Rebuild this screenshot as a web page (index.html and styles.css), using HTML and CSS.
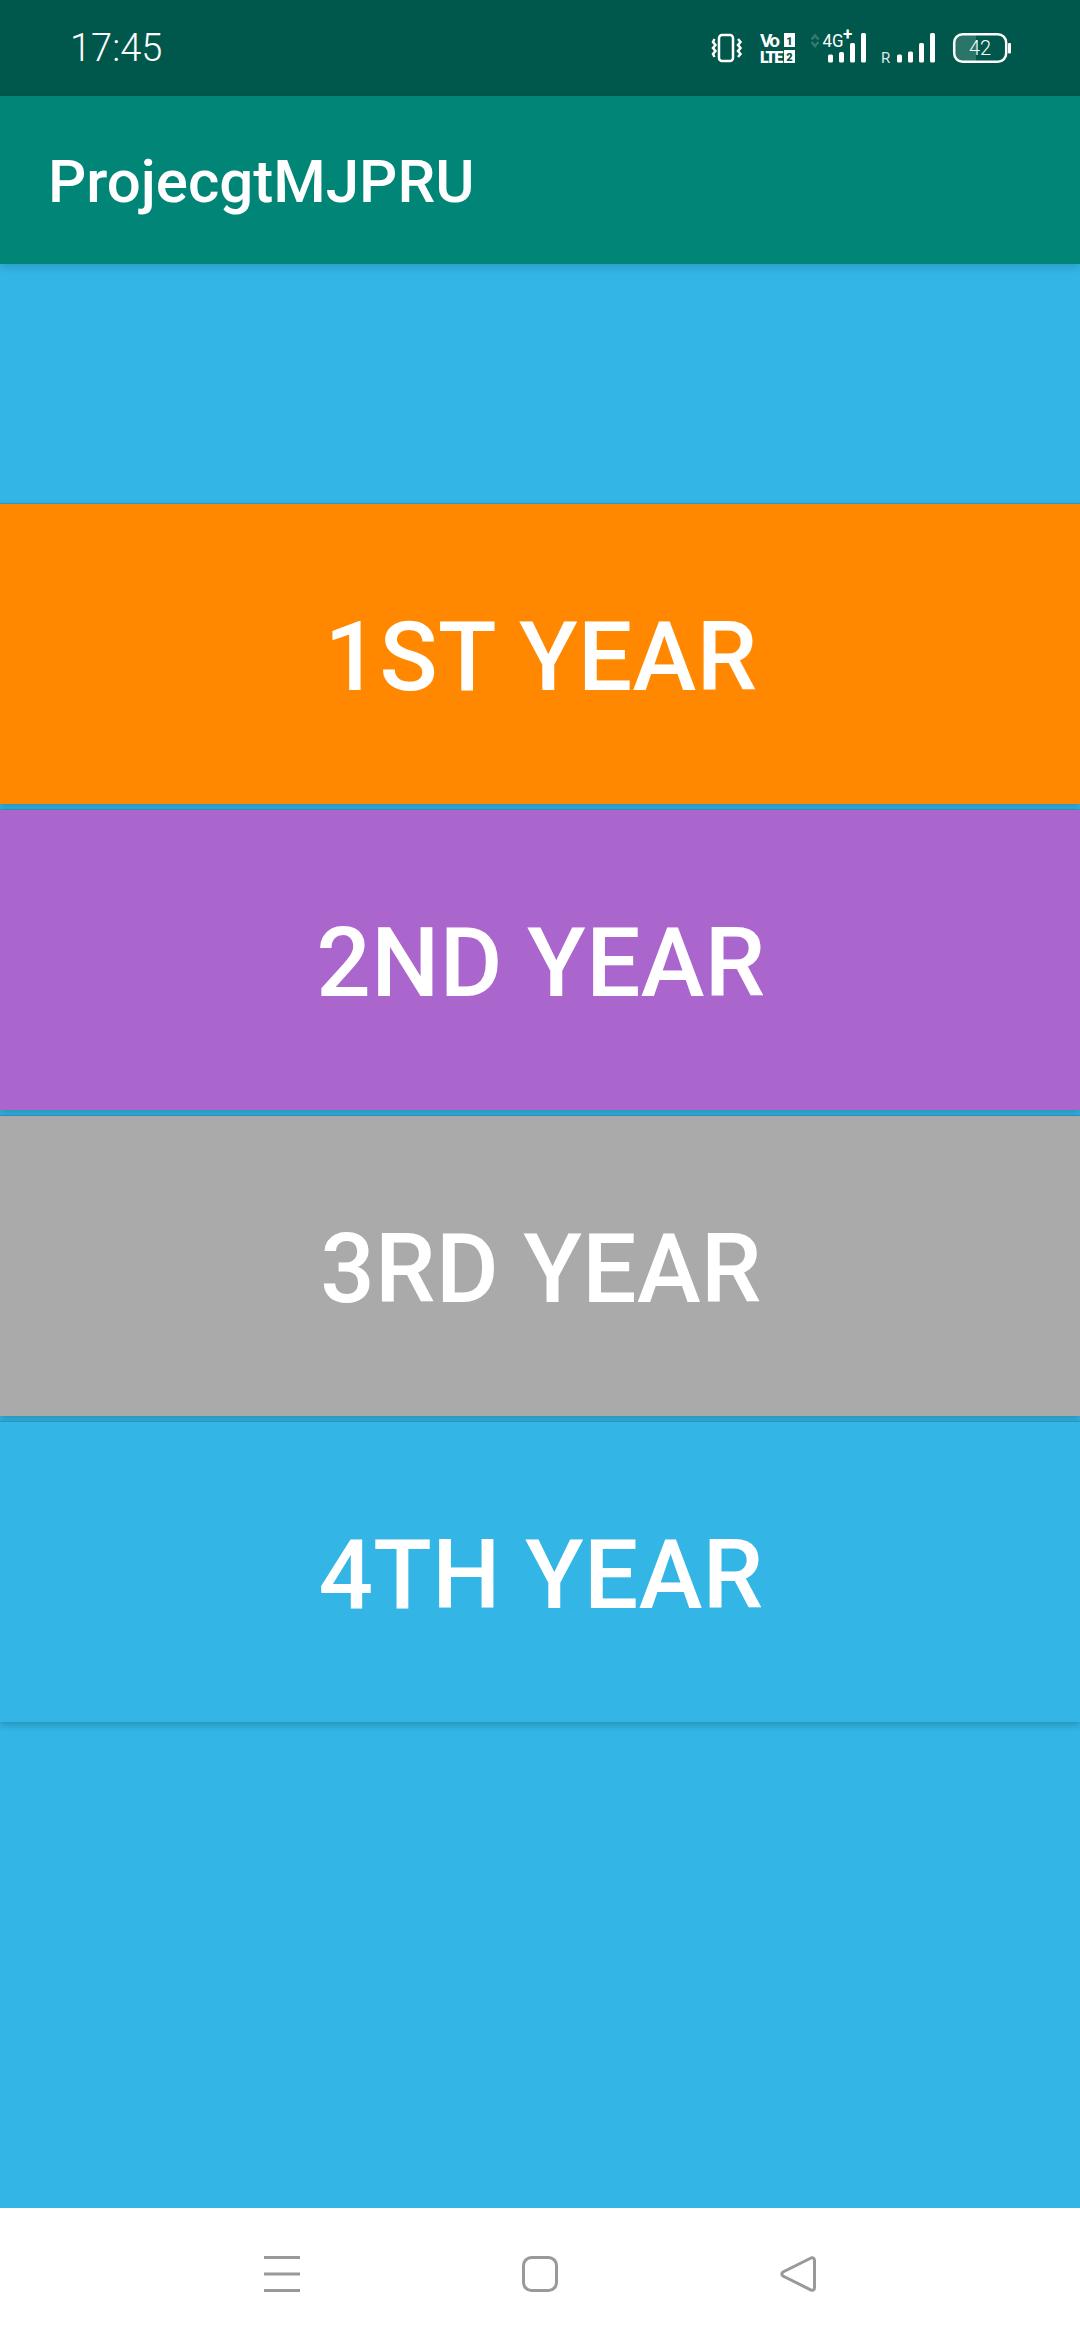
FILE: index.html
```html
<!DOCTYPE html>
<html lang="en">
<head>
    <meta charset="UTF-8">
    <meta name="viewport" content="width=device-width, initial-scale=1.0">
    <title>ProjecgtMJPRU</title>
    <link rel="stylesheet" href="styles.css">
</head>
<body>

    <div class="phone">
        <div class="status-bar">
            <span class="clock">17:45</span>
            <div class="status-icons">
                <!-- vibrate -->
                <svg class="status-icon" width="33" height="96" viewBox="0 0 33 96">
                    <rect x="7" y="35" width="14" height="26" rx="3" class="line"/>
                    <polyline points="2.5,39 1,42 3.5,45 1,48 3.5,51 1,54 2.5,57" class="line"/>
                    <polyline points="26,39 28.5,42 26,45 28.5,48 26,51 28.5,54 26,57" class="line"/>
                </svg>
                <!-- volte, both sims -->
                <svg class="status-icon" width="35" height="96" viewBox="0 0 35 96">
                    <text x="0" y="47" class="tiny" textLength="20" lengthAdjust="spacing">Vo</text>
                    <text x="0" y="62.5" class="lte">LTE</text>
                    <rect x="24" y="33" width="11" height="14" class="solid"/>
                    <text x="29.5" y="44.5" class="sim">1</text>
                    <rect x="24" y="50" width="11" height="13" class="solid"/>
                    <text x="29.5" y="61" class="sim">2</text>
                </svg>
                <!-- 4g+ signal -->
                <svg class="status-icon" width="56" height="96" viewBox="0 0 56 96">
                    <polyline points="1.5,39.5 5,35.5 8.5,39.5" class="dim"/>
                    <polyline points="1.5,42 5,46 8.5,42" class="dim"/>
                    <text x="12.5" y="46.5" class="net" textLength="21" lengthAdjust="spacingAndGlyphs">4G</text>
                    <text x="33" y="40" class="plus">+</text>
                    <rect x="18" y="54.5" width="5" height="8" rx="1.5" class="solid"/>
                    <rect x="29" y="52" width="5" height="10.5" rx="1.5" class="solid"/>
                    <rect x="40" y="43" width="5" height="19.5" rx="1.5" class="solid"/>
                    <rect x="51" y="33" width="5" height="29.5" rx="1.5" class="solid"/>
                </svg>
                <!-- roaming signal -->
                <svg class="status-icon" width="57" height="96" viewBox="0 0 57 96">
                    <text x="0" y="63" class="roam">R</text>
                    <rect x="16" y="54.5" width="5" height="8" rx="1.5" class="solid"/>
                    <rect x="27" y="51.5" width="5" height="11" rx="1.5" class="solid"/>
                    <rect x="38" y="43" width="5" height="19.5" rx="1.5" class="solid"/>
                    <rect x="49" y="33" width="5" height="29.5" rx="1.5" class="solid"/>
                </svg>
                <!-- battery -->
                <svg class="status-icon" width="58" height="96" viewBox="0 0 58 96">
                    <path d="M9 35 H23 V61 H9 a7 7 0 0 1 -7 -7 V42 a7 7 0 0 1 7 -7 Z" class="charge"/>
                    <rect x="1.2" y="34.2" width="52" height="27.6" rx="8.5" class="line"/>
                    <rect x="55" y="43" width="3" height="10.5" rx="1" class="solid"/>
                    <text x="27" y="55" class="level">42</text>
                </svg>
            </div>
        </div>

        <div class="app-bar">ProjecgtMJPRU</div>

        <div class="content">
            <button class="year-button orange">1ST YEAR</button>
            <button class="year-button purple">2ND YEAR</button>
            <button class="year-button grey">3RD YEAR</button>
            <button class="year-button blue">4TH YEAR</button>
        </div>

        <div class="nav-bar">
            <svg width="36" height="36" viewBox="0 0 36 36">
                <path d="M0 1.5 H36 M0 18 H36 M0 34.5 H36" class="nav-menu"/>
            </svg>
            <svg width="36" height="36" viewBox="0 0 36 36">
                <rect x="1.5" y="1.5" width="33" height="33" rx="8" class="nav-line"/>
            </svg>
            <svg width="36" height="36" viewBox="0 0 36 36">
                <path d="M31 2 L3 16 Q0.6 18 3 20 L31 34 Q34.5 35 34.5 31.5 V4.5 Q34.5 1 31 2 Z" class="nav-line"/>
            </svg>
        </div>
    </div>

</body>
</html>
```

FILE: styles.css
```css
body {
    margin: 0;
    padding: 0;
    font-family: 'Roboto', sans-serif;
    background-color: #33B5E5;
}

.phone {
    width: 1080px;
    height: 2340px;
    display: flex;
    flex-direction: column;
    overflow: hidden;
}

/* Status bar */
.status-bar {
    height: 96px;
    flex: none;
    display: flex;
    justify-content: space-between;
    align-items: center;
    padding: 0 69px 0 70px;
    box-sizing: border-box;
    background-color: #00574B;
}

.clock {
    font-size: 38px;
    font-weight: 300;
    color: #ffffff;
}

.status-icons {
    display: flex;
    gap: 15px;
}

.status-icon {
    display: block;
    overflow: visible;
}

.line {
    fill: none;
    stroke: #ffffff;
    stroke-width: 2.5;
}

.solid {
    fill: #ffffff;
}

.dim {
    fill: none;
    stroke: #33796e;
    stroke-width: 2.6;
}

.charge {
    fill: #2b7468;
}

.tiny {
    font: 700 19px 'Roboto', sans-serif;
    fill: #ffffff;
}

.lte {
    font: 900 16px 'Roboto', sans-serif;
    letter-spacing: -1.5px;
    fill: #ffffff;
}

.sim {
    font: 900 11px 'Roboto', sans-serif;
    fill: #00574B;
    text-anchor: middle;
}

.net {
    font: 400 18.5px 'Roboto', sans-serif;
    fill: #ffffff;
}

.plus {
    font: 700 17px 'Roboto', sans-serif;
    fill: #ffffff;
}

.roam {
    font: 400 15px 'Roboto', sans-serif;
    fill: #dbe7e5;
}

.level {
    font: 300 20px 'Roboto', sans-serif;
    fill: #ffffff;
    text-anchor: middle;
}

/* App bar */
.app-bar {
    height: 168px;
    flex: none;
    position: relative;
    z-index: 1;
    display: flex;
    align-items: center;
    padding: 3px 0 0 48px;
    box-sizing: border-box;
    background-color: #008577;
    color: #ffffff;
    font-size: 60px;
    font-weight: 500;
    box-shadow: 0 3px 8px rgba(0, 0, 0, 0.14);
}

/* Year buttons */
.content {
    flex: 1;
    display: flex;
    flex-direction: column;
    gap: 6px;
    padding-top: 240px;
    background-color: #33B5E5;
}

.year-button {
    height: 300px;
    flex: none;
    border: none;
    padding: 6px 0 0 2px;
    color: #ffffff;
    font-family: 'Roboto', sans-serif;
    font-size: 96px;
    font-weight: 500;
    letter-spacing: 0.4px;
    box-shadow: 0 3px 7px rgba(0, 0, 0, 0.2), 0 -1px 1px rgba(0, 0, 0, 0.12);
}

.orange { background-color: #FF8800; }
.purple { background-color: #AA66CC; }
.grey { background-color: #AAAAAA; }
.blue { background-color: #33B5E5; }

/* Navigation bar */
.nav-bar {
    height: 132px;
    flex: none;
    display: flex;
    justify-content: center;
    align-items: center;
    gap: 222px;
    background-color: #ffffff;
}

.nav-menu {
    fill: none;
    stroke: #999999;
    stroke-width: 3;
}

.nav-line {
    fill: none;
    stroke: #999999;
    stroke-width: 3;
}
```
